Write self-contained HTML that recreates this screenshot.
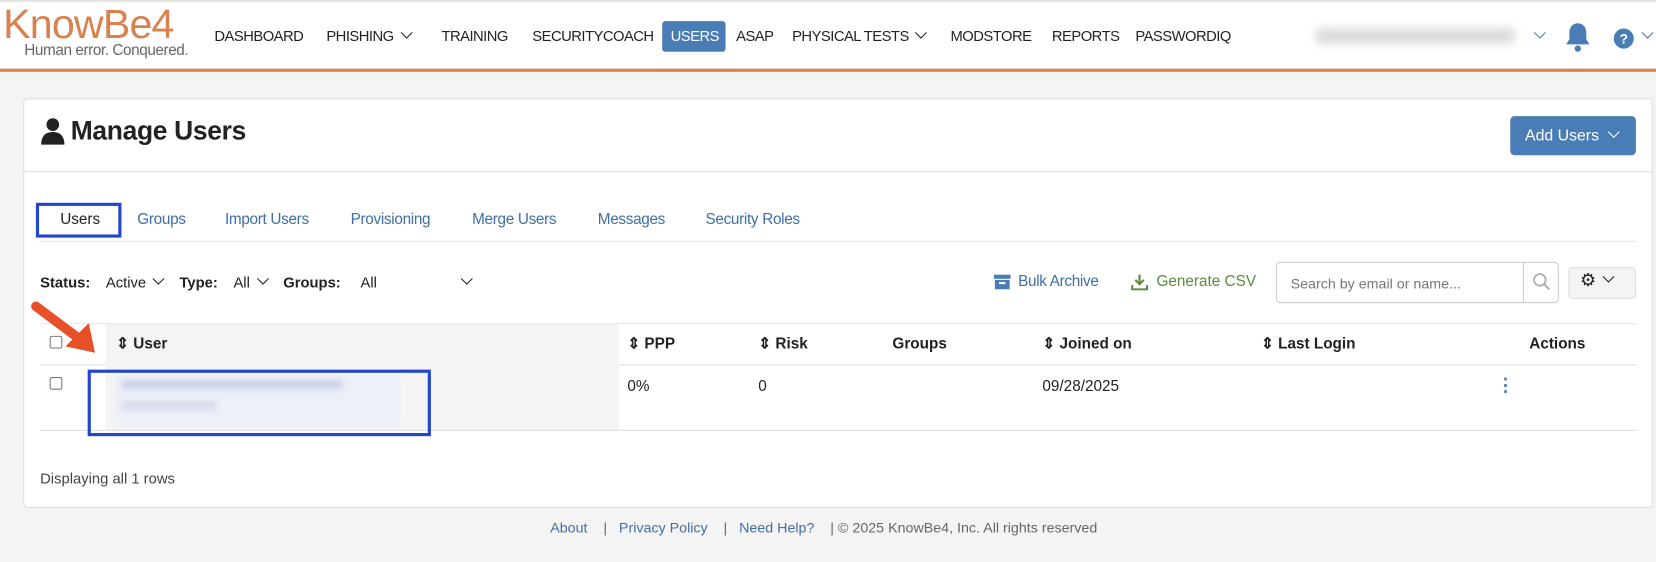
<!DOCTYPE html>
<html><head><style>
*{margin:0;padding:0;box-sizing:border-box}
body{width:1656px;height:562px;background:#f4f4f4;font-family:"Liberation Sans",Arial,sans-serif;position:relative;overflow:hidden;color:#222}
#w{position:absolute;left:0;top:0;width:1568px;height:532px;transform:scale(1.05612);transform-origin:0 0}
.a{position:absolute;white-space:nowrap}
.hdr{position:absolute;left:0;top:0;width:1568px;height:68px;background:#fff;border-top:2px solid #e6e6e0;border-bottom:3px solid #d9824f}
.nav{font-size:14px;color:#222;top:26px;letter-spacing:-0.5px}
.lnk{color:#3f6fa5;font-size:14.5px;letter-spacing:-0.3px}
.card{position:absolute;left:22px;top:93px;width:1543px;height:388px;background:#fff;border:1px solid #ddd;border-radius:4px}
.th{font-weight:bold;font-size:14.5px;top:318px}
.chev{display:inline-block;width:8px;height:8px;border-right:1.6px solid currentColor;border-bottom:1.6px solid currentColor;transform:rotate(45deg);margin-left:8px;position:relative;top:-4px}
.cb{position:absolute;width:12px;height:12px;border:1px solid #777;border-radius:2px;background:#fff}
</style></head><body><div id="w">
<div class="hdr"></div>
<div class="a" style="left:3px;top:2px;font-size:39px;color:#d9824f;letter-spacing:-0.8px">KnowBe4</div>
<div class="a" style="left:23px;top:40px;font-size:14.5px;color:#666;letter-spacing:-0.4px">Human error. Conquered.</div>
<div class="a nav" style="left:203px">DASHBOARD</div>
<div class="a nav" style="left:309px">PHISHING<span class="chev"></span></div>
<div class="a nav" style="left:418px">TRAINING</div>
<div class="a nav" style="left:504px">SECURITYCOACH</div>
<div class="a" style="left:627px;top:20px;width:60px;height:29px;background:#4a7db5;border-radius:3px"></div>
<div class="a nav" style="left:635px;color:#fff">USERS</div>
<div class="a nav" style="left:697px">ASAP</div>
<div class="a nav" style="left:750px">PHYSICAL TESTS<span class="chev"></span></div>
<div class="a nav" style="left:900px">MODSTORE</div>
<div class="a nav" style="left:996px">REPORTS</div>
<div class="a nav" style="left:1075px">PASSWORDIQ</div>
<div class="a" style="left:1245px;top:26px;width:190px;height:16px;background:#ddd;border-radius:8px;filter:blur(4px)"></div>
<div class="a" style="left:1446px;top:26px;color:#4a7db5"><span class="chev"></span></div>
<svg class="a" style="left:1480px;top:20px" width="28" height="30" viewBox="0 0 28 30"><path d="M14 2c-5 0-8 4-8 9v6l-3 5h22l-3-5v-6c0-5-3-9-8-9z" fill="#4a7db5"/><circle cx="14" cy="26" r="3" fill="#4a7db5"/></svg>
<div class="a" style="left:1528px;top:27px;width:19px;height:19px;border-radius:50%;background:#4a7db5;color:#fff;font-size:13px;font-weight:bold;text-align:center;line-height:19px">?</div>
<div class="a" style="left:1548px;top:26px;color:#4a7db5"><span class="chev"></span></div>

<div class="card"></div>
<svg class="a" style="left:38px;top:111px" width="24" height="26" viewBox="0 0 24 26"><circle cx="12" cy="7" r="6" fill="#222"/><path d="M1 26c0-8 4-12 11-12s11 4 11 12z" fill="#222"/></svg>
<div class="a" style="left:67px;top:110px;font-size:25px;font-weight:bold;letter-spacing:-0.3px">Manage Users</div>
<div class="a" style="left:1430px;top:110px;width:119px;height:37px;background:#4a7db5;border-radius:4px;color:#fff;font-size:15px;line-height:37px;padding-left:14px">Add Users<span class="chev" style="margin-left:10px"></span></div>
<div class="a" style="left:22px;top:162px;width:1543px;height:1px;background:#e2e2e2"></div>
<div class="a" style="left:38px;top:228px;width:1512px;height:1px;background:#e6e6e6"></div>
<div class="a" style="left:34px;top:192px;width:81px;height:33px;border:3px solid #2247c9;background:#fff"></div>
<div class="a" style="left:57px;top:200px;font-size:14.5px;color:#222">Users</div>
<div class="a lnk" style="left:130px;top:200px">Groups</div>
<div class="a lnk" style="left:213px;top:200px">Import Users</div>
<div class="a lnk" style="left:332px;top:200px">Provisioning</div>
<div class="a lnk" style="left:447px;top:200px">Merge Users</div>
<div class="a lnk" style="left:566px;top:200px">Messages</div>
<div class="a lnk" style="left:668px;top:200px">Security Roles</div>

<div class="a" style="left:38px;top:259px;font-size:14px"><b>Status:</b>&nbsp;&nbsp;&nbsp; Active<span class="chev"></span>&nbsp;&nbsp;&nbsp; <b>Type:</b>&nbsp;&nbsp;&nbsp; All<span class="chev"></span>&nbsp;&nbsp;&nbsp; <b>Groups:</b>&nbsp;&nbsp;&nbsp;&nbsp; All</div>
<div class="a" style="left:430px;top:259px"><span class="chev"></span></div>
<svg class="a" style="left:941px;top:260px" width="16" height="14" viewBox="0 0 16 14"><rect x="0" y="0" width="16" height="4" fill="#4a7db5"/><rect x="1" y="5" width="14" height="9" fill="#4a7db5"/><rect x="5" y="7" width="6" height="2" fill="#fff"/></svg>
<div class="a lnk" style="left:964px;top:259px">Bulk Archive</div>
<svg class="a" style="left:1071px;top:259px" width="16" height="16" viewBox="0 0 16 16"><path d="M8 1v9M4 6l4 4 4-4" stroke="#5a8a3a" stroke-width="2" fill="none"/><path d="M1 11v4h14v-4" stroke="#5a8a3a" stroke-width="2" fill="none"/></svg>
<div class="a" style="left:1095px;top:259px;font-size:14.5px;color:#5a8a3a">Generate CSV</div>
<div class="a" style="left:1208px;top:248px;width:268px;height:39px;border:1px solid #ccc;border-radius:4px;background:#fff"></div>
<div class="a" style="left:1442px;top:248px;width:1px;height:39px;background:#ccc"></div>
<div class="a" style="left:1222px;top:261px;font-size:13.5px;color:#777">Search by email or name...</div>
<svg class="a" style="left:1451px;top:258px" width="18" height="18" viewBox="0 0 18 18"><circle cx="7" cy="7" r="5.5" stroke="#aaa" stroke-width="1.6" fill="none"/><path d="M11 11l5 5" stroke="#aaa" stroke-width="1.8"/></svg>
<div class="a" style="left:1485px;top:253px;width:64px;height:30px;border:1px solid #ddd;border-radius:4px;background:#f4f4f4"></div>
<div class="a" style="left:1496px;top:256px;font-size:17px">⚙<span class="chev" style="margin-left:8px;top:-5px"></span></div>

<div class="a" style="left:38px;top:306px;width:1512px;height:40px;background:#fff;border-top:1px solid #e6e6e6;border-bottom:1px solid #ddd"></div>
<div class="a" style="left:100px;top:307px;width:486px;height:100px;background:#f4f4f4"></div>
<div class="a" style="left:38px;top:407px;width:1512px;height:1px;background:#ddd"></div>
<div class="cb" style="left:47px;top:318px"></div>
<div class="cb" style="left:47px;top:357px"></div>
<div class="a th" style="left:110px">⇕ User</div>
<div class="a th" style="left:594px">⇕ PPP</div>
<div class="a th" style="left:718px">⇕ Risk</div>
<div class="a th" style="left:845px">Groups</div>
<div class="a th" style="left:987px">⇕ Joined on</div>
<div class="a th" style="left:1194px">⇕ Last Login</div>
<div class="a th" style="left:1448px">Actions</div>
<div class="a" style="left:108px;top:356px;width:270px;height:48px;background:#eef0f8;filter:blur(2px)"></div>
<div class="a" style="left:115px;top:360px;width:210px;height:8px;background:#c8cfe6;filter:blur(3px)"></div>
<div class="a" style="left:115px;top:380px;width:90px;height:8px;background:#d4d9ea;filter:blur(3px)"></div>
<div class="a" style="left:83px;top:350px;width:325px;height:63px;border:3px solid #2247c9"></div>
<div class="a" style="left:594px;top:358px;font-size:14.5px">0%</div>
<div class="a" style="left:718px;top:358px;font-size:14.5px">0</div>
<div class="a" style="left:987px;top:358px;font-size:14.5px">09/28/2025</div>
<div class="a" style="left:1422px;top:356px;font-size:18px;color:#4a7db5;font-weight:bold;line-height:6px;width:8px;text-align:center">·<br>·<br>·</div>
<svg class="a" style="left:28px;top:284px" width="66" height="54" viewBox="0 0 66 54"><path d="M6 6L46 36" stroke="#e8502a" stroke-width="9" stroke-linecap="round"/><path d="M34 44L62 50L56 22z" fill="#e8502a"/></svg>
<div class="a" style="left:38px;top:445px;font-size:14px;color:#444">Displaying all 1 rows</div>
<div class="a" style="left:521px;top:492px;font-size:13.5px;color:#666"><span style="color:#3f6fa5">About</span>&nbsp;&nbsp;&nbsp; | &nbsp;&nbsp;<span style="color:#3f6fa5">Privacy Policy</span>&nbsp;&nbsp;&nbsp; | &nbsp;&nbsp;<span style="color:#3f6fa5">Need Help?</span>&nbsp;&nbsp;&nbsp; | © 2025 KnowBe4, Inc. All rights reserved</div>
</div></body></html>
